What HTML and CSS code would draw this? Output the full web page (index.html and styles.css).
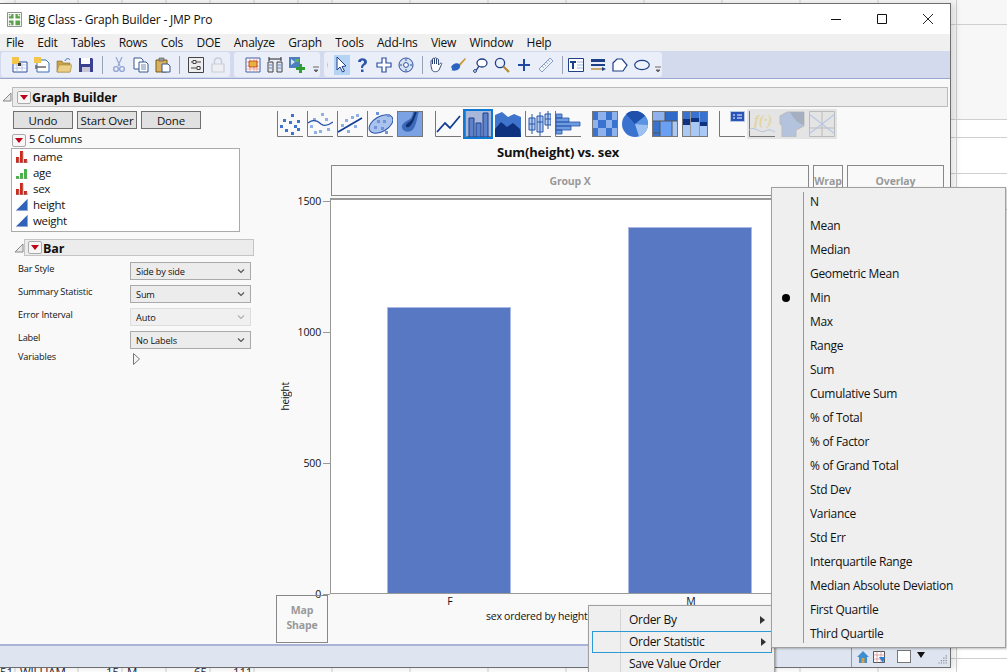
FILE: index.html
```html
<html>
  <head>
    <title>Big Class - Graph Builder - JMP Pro</title>
    <link rel="stylesheet" href="styles.css">
  </head>
  <body>
    <svg class="defs">
      <symbol id="chev" viewBox="0 0 8 8"><path d="M1 2 L7 2 M2 5 L6 5 L4 7 Z" stroke="#666" fill="#666"></path></symbol>
      <symbol id="grip" viewBox="0 0 4 20"><path d="M2 1 V3 M2 7 V9 M2 12 V14 M2 17 V19" stroke="#444" stroke-width="2"></path></symbol>
      <symbol id="disc" viewBox="0 0 10 10"><path d="M9 1 V9 H1 Z" fill="#e8e8e8" stroke="#888"></path></symbol>
      <symbol id="down" viewBox="0 0 8 6"><path d="M1 1.5 L4 4.5 L7 1.5" fill="none" stroke="#555" stroke-width="1.2"></path></symbol>
      <symbol id="nom" viewBox="0 0 12 12"><path d="M0 6 H3 V12 H0 Z M4 0 H7 V12 H4 Z M8 8 H11 V12 H8 Z" fill="#d3261a"></path><path d="M3 12 V7 M7 12 V1 M11 12 V9 M0 12 H12" stroke="#999" stroke-width=".8"></path></symbol>
      <symbol id="ord" viewBox="0 0 12 12"><path d="M0 9 H3 V12 H0 Z M4 6 H7 V12 H4 Z M8 2 H11 V12 H8 Z" fill="#4cb04c"></path><path d="M0 12 H12" stroke="#999" stroke-width=".8"></path></symbol>
      <symbol id="cont" viewBox="0 0 12 12"><path d="M0 11.5 L11.5 0 V11.5 Z" fill="#2f63b8"></path><path d="M0 12 H12 V0" fill="none" stroke="#8a9bb8" stroke-width=".8"></path></symbol>
      <symbol id="axes" viewBox="0 0 26 26"><path d="M.5 0 V25.5 H26" fill="none" stroke="#777"></path></symbol>
    </svg>

    <div class="sheet">
      <svg class="sheet-lines" width="1007" height="672">
        <path d="M15 0 V3 M78 0 V3 M122 0 V3 M166 0 V3 M210 0 V3 M254 0 V3 M298 0 V3 M332 0 V3 M410 0 V3 M488 0 V3 M566 0 V3 M644 0 V3 M722 0 V3 M800 0 V3 M878 0 V3 M956.5 0 V672
                 M15 667 V672 M78 667 V672 M122 667 V672 M166 667 V672 M210 667 V672 M254 667 V672 M332 667 V672 M410 667 V672 M488 667 V672 M566 667 V672 M644 667 V672 M722 667 V672 M800 667 V672 M878 667 V672
                 M951 24.5 H1007 M951 119.5 H1007 M951 137.5 H1007 M951 173.5 H1007 M951 209.5 H1007 M951 658.5 H1007" stroke="#cfcfcf" fill="none"></path>
      </svg>
      <div class="sheet-row">
        <span class="cell-id">51</span><span class="cell-name">WILLIAM</span><span class="cell-num">15</span><span class="cell-sex">M</span><span class="cell-num2">65</span><span class="cell-num3">111</span>
      </div>
    </div>

    <div class="window">
      <div class="titlebar">
        <svg class="app-icon" viewBox="0 0 16 16">
          <path d="M.5 .5 H15.5 V15.5 H.5 Z" fill="#fff" stroke="#888"></path>
          <path d="M2 2 H7 V7 H2 Z M9 2 H14 V7 H9 Z M2 9 H7 V14 H2 Z M9 9 H14 V14 H9 Z" fill="#5fa14e"></path>
          <path d="M4 2 V4 H2 M12 2 V4 H14 M4 14 V12 H2" stroke="#fff" fill="none"></path>
        </svg>
        <span class="title-text">Big Class - Graph Builder - JMP Pro</span>
        <div class="win-controls">
          <svg class="win-btn" viewBox="0 0 10 10"><path d="M0 5.5 H10" stroke="#111"></path></svg>
          <svg class="win-btn" viewBox="0 0 10 10"><path d="M.5 .5 H9.5 V9.5 H.5 Z" stroke="#111" fill="none"></path></svg>
          <svg class="win-btn" viewBox="0 0 10 10"><path d="M0 0 L10 10 M10 0 L0 10" stroke="#111" stroke-width=".9"></path></svg>
        </div>
      </div>

      <div class="menubar">
        <span>File</span><span>Edit</span><span>Tables</span><span>Rows</span><span>Cols</span><span>DOE</span><span>Analyze</span><span>Graph</span><span>Tools</span><span>Add-Ins</span><span>View</span><span>Window</span><span>Help</span>
      </div>

      <div class="toolbar">
        <div class="tool-group g1">
          <svg class="grip"><use href="#grip"></use></svg>
          <svg class="tool" viewBox="0 0 16 16"><path d="M1 5 H15 V15 H1 Z" fill="#fff" stroke="#2a4f9e"></path><path d="M1 8 H15 M1 11 H15 M5 5 V15 M10 5 V15" stroke="#9db6e0" stroke-width=".7"></path><path d="M0 0 H7 V7 H0 Z" fill="#f1c64a"></path><path d="M6 6 H9 V9 H6 Z" fill="#333"></path></svg>
          <svg class="tool" viewBox="0 0 16 16"><path d="M3 3 H12 L15 6 V15 H3 Z" fill="#fff" stroke="#3b6fb5"></path><path d="M0 0 H7 V6 H0 Z" fill="#f1c64a"></path><path d="M2 10 H12 M2 8 V12" stroke="#666" stroke-width="1.5"></path></svg>
          <svg class="tool" viewBox="0 0 16 16"><path d="M1 4 H6 L7 6 H14 V15 H1 Z" fill="#c9a24a" stroke="#8a6c20" stroke-width=".6"></path><path d="M3 8 H16 L14 15 H1 Z" fill="#ecd088" stroke="#a88a3a" stroke-width=".6"></path><path d="M9 4 C10 1 13 1 14 3" fill="none" stroke="#3a6fc8"></path></svg>
          <svg class="tool" viewBox="0 0 16 16"><path d="M1 1 H14 L15 2 V15 H1 Z" fill="#39408f"></path><path d="M3 1 H12 V7 H3 Z" fill="#fff"></path><path d="M4 10 H12 V15 H4 Z" fill="#c8c8d8"></path></svg>
          <span class="tool-sep"></span>
          <svg class="tool off" viewBox="0 0 16 16"><path d="M5 0 L9 9 M11 0 L7 9" stroke="#7f95c8" stroke-width="1.2"></path><circle cx="5" cy="12" r="2.4" fill="none" stroke="#7f95c8" stroke-width="1.4"></circle><circle cx="11" cy="12" r="2.4" fill="none" stroke="#7f95c8" stroke-width="1.4"></circle></svg>
          <svg class="tool" viewBox="0 0 16 16"><path d="M1 1 H8 L10 3 V12 H1 Z" fill="#fff" stroke="#34598f"></path><path d="M6 5 H13 L15 7 V15 H6 Z" fill="#fff" stroke="#34598f"></path><path d="M8 8 H13 M8 10 H13 M8 12 H13" stroke="#34598f" stroke-width=".7"></path></svg>
          <svg class="tool" viewBox="0 0 16 16"><path d="M1 3 H12 V15 H1 Z" fill="#d8b060" stroke="#7a5a18"></path><path d="M4 1 H9 V4 H4 Z" fill="#999" stroke="#555" stroke-width=".6"></path><path d="M7 7 H13 L15 9 V15 H7 Z" fill="#fff" stroke="#34598f"></path></svg>
          <span class="tool-sep"></span>
          <svg class="tool" viewBox="0 0 16 16"><path d="M.5 .5 H15.5 V15.5 H.5 Z" fill="#eee" stroke="#444"></path><path d="M3 5 H13 M3 11 H13" stroke="#444"></path><path d="M5 3.5 H8 V6.5 H5 Z M9 9.5 H12 V12.5 H9 Z" fill="#fff" stroke="#444"></path></svg>
          <svg class="tool off" viewBox="0 0 16 16"><path d="M2 7 H14 V15 H2 Z" fill="#eef0f4" stroke="#c2c6cc" stroke-width="1.2"></path><path d="M4.5 7 V4 C4.5 0 11.5 0 11.5 4 V7" fill="none" stroke="#c2c6cc" stroke-width="1.4"></path></svg>
          <svg class="chev"><use href="#chev"></use></svg>
        </div>
        <div class="tool-group g2">
          <svg class="grip"><use href="#grip"></use></svg>
          <svg class="tool" viewBox="0 0 16 16"><path d="M1 1 H15 V15 H1 Z" fill="#fff" stroke="#3b5ea8"></path><path d="M1 5 H15 M1 9 H15 M1 12 H15 M5 1 V15 M9 1 V15 M12 1 V15" stroke="#e58a7a" stroke-width=".7"></path><path d="M4 4 H12 V10 H4 Z" fill="#e9b23e" stroke="#b03020" stroke-width=".8"></path></svg>
          <svg class="tool" viewBox="0 0 16 16"><path d="M1 5 H6 V15 H1 Z M10 5 H15 V15 H10 Z" fill="#dfe6f2" stroke="#444"></path><path d="M2 8 H5 M2 11 H5 M11 8 H14 M11 11 H14" stroke="#6a8ac0"></path><path d="M2 2 H14 M2 0 V4 M14 0 V4" stroke="#222"></path></svg>
          <svg class="tool" viewBox="0 0 16 16"><path d="M0 0 H11 V11 H0 Z" fill="#4d7fbf"></path><path d="M2 2 L6 5 L2 8 Z" fill="#d6e8f5"></path><path d="M6 2 H10 V5 H6 Z" fill="#57b06a"></path><path d="M10 7 H13 V10 H16 V13 H13 V16 H10 V13 H7 V10 H10 Z" fill="#2fa02f"></path></svg>
          <svg class="chev"><use href="#chev"></use></svg>
        </div>
        <div class="tool-group g3">
          <svg class="grip"><use href="#grip"></use></svg>
          <span class="tool-active"><svg class="tool" viewBox="0 0 16 16"><path d="M3 0 V13 L6 10 L8.5 15 L10.5 14 L8 9.5 L12 9 Z" fill="#fff" stroke="#1f3f86"></path></svg></span>
          <svg class="tool" viewBox="0 0 16 16"><path d="M4 5 C4 0 13 0 13 5 C13 8 9 8 9 11 H7 C7 7 10 7 10 5 C10 3 7 3 7 5 Z" fill="#2a55a8"></path><path d="M7 12.5 H9.5 V15 H7 Z" fill="#2a55a8"></path></svg>
          <svg class="tool" viewBox="0 0 16 16"><path d="M6 1 H10 V6 H15 V10 H10 V15 H6 V10 H1 V6 H6 Z" fill="#fff" stroke="#2a4f9e" stroke-width="1.2"></path></svg>
          <svg class="tool" viewBox="0 0 16 16"><circle cx="8" cy="8" r="7" fill="#d5e0f2" stroke="#2a4f9e"></circle><circle cx="8" cy="8" r="2.4" fill="#fff" stroke="#2a4f9e"></circle><path d="M8 2 V4 M8 12 V14 M2 8 H4 M12 8 H14" stroke="#2a4f9e"></path></svg>
          <span class="tool-sep tight"></span>
          <svg class="tool" viewBox="0 0 16 16"><path d="M3 9 V4 C3 3 4.5 3 4.5 4 V7 V2 C4.5 1 6.5 1 6.5 2 V7 V1.5 C6.5 .5 8.5 .5 8.5 1.5 V7 V2.5 C8.5 1.5 10.5 1.5 10.5 2.5 V8 L12 6.5 C13 5.5 14.5 6.5 13.5 7.5 L11 13 C10 15 5 15.5 4 13 Z" fill="#fff" stroke="#2a3f70" stroke-width=".9"></path></svg>
          <svg class="tool" viewBox="0 0 16 16"><path d="M9 7 L15 1 L16 2 L10 9 Z" fill="#c89838"></path><path d="M1 10 C3 6 8 5 10 8 C11 12 6 15 1 13 C3 13 2 11 1 10 Z" fill="#2a63c0"></path></svg>
          <svg class="tool" viewBox="0 0 16 16"><ellipse cx="10" cy="6" rx="5" ry="4" fill="#fff" stroke="#1f3f86" stroke-width="1.3"></ellipse><path d="M7 9 C6 11 5 13 2 15" fill="none" stroke="#1f3f86" stroke-width="1.3"></path><circle cx="3" cy="14" r="1.4" fill="#fff" stroke="#1f3f86"></circle></svg>
          <svg class="tool" viewBox="0 0 16 16"><circle cx="6" cy="6" r="4.6" fill="#e8f0fb" stroke="#1f3f86" stroke-width="1.3"></circle><path d="M9.5 9.5 L15 15" stroke="#b88a30" stroke-width="2.2"></path></svg>
          <svg class="tool" viewBox="0 0 16 16"><path d="M8 2 V14 M2 8 H14" stroke="#1f4aa0" stroke-width="2"></path></svg>
          <svg class="tool" viewBox="0 0 16 16"><path d="M1 12 L12 1 L15 4 L4 15 Z" fill="#eef2fa" stroke="#8b9cc2"></path><path d="M4 9 L6 11 M6 7 L8 9 M8 5 L10 7 M10 3 L12 5" stroke="#8b9cc2" stroke-width=".7"></path></svg>
          <span class="tool-sep tight"></span>
          <svg class="tool" viewBox="0 0 16 16"><path d="M.5 1.5 H15.5 V14.5 H.5 Z" fill="#fff" stroke="#1f3f86"></path><path d="M9 5 H15 M9 8 H15 M9 11 H15" stroke="#9db6e0"></path><path d="M2 4 H8 V6 H6 V12 H4 V6 H2 Z" fill="#1f3f86"></path></svg>
          <svg class="tool" viewBox="0 0 16 16"><path d="M1 2 H15 V5 H1 Z M1 7 H15 V9 H1 Z" fill="#1f3f86"></path><path d="M1 12 H13" stroke="#b88a30" stroke-width="1.4"></path><path d="M12 10 L16 12 L12 14 Z" fill="#1f3f86"></path></svg>
          <svg class="tool" viewBox="0 0 16 16"><path d="M1 6 L5 2 H10 L15 8 L11 14 H1 Z" fill="#fff" stroke="#1f3f86" stroke-width="1.2"></path></svg>
          <svg class="tool" viewBox="0 0 16 16"><ellipse cx="8" cy="8" rx="7.3" ry="4.6" fill="#eef3fb" stroke="#1f3f86" stroke-width="1.2"></ellipse></svg>
          <svg class="chev chev-g3"><use href="#chev"></use></svg>
        </div>
      </div>

      <div class="outline-main">
        <svg class="disc"><use href="#disc"></use></svg>
        <div class="outline-box"><span class="redbtn"></span><span class="outline-title">Graph Builder</span></div>
      </div>

      <div class="builder">
        <div class="side">
          <div class="side-buttons">
            <span class="push">Undo</span><span class="push">Start Over</span><span class="push">Done</span>
          </div>
          <div class="cols-head"><span class="redbtn"></span><span class="cols-text">5 Columns</span></div>
          <div class="col-list">
            <div class="col-row"><svg class="col-icon"><use href="#nom"></use></svg><span>name</span></div>
            <div class="col-row"><svg class="col-icon"><use href="#ord"></use></svg><span>age</span></div>
            <div class="col-row"><svg class="col-icon"><use href="#nom"></use></svg><span>sex</span></div>
            <div class="col-row"><svg class="col-icon"><use href="#cont"></use></svg><span>height</span></div>
            <div class="col-row"><svg class="col-icon"><use href="#cont"></use></svg><span>weight</span></div>
          </div>
          <div class="bar-head">
            <svg class="disc"><use href="#disc"></use></svg>
            <div class="bar-box"><span class="redbtn"></span><span class="outline-title">Bar</span></div>
          </div>
          <div class="opts">
            <span class="opt-label">Bar Style</span>
            <div class="select"><span>Side by side</span><svg class="select-arrow"><use href="#down"></use></svg></div>
            <span class="opt-label">Summary Statistic</span>
            <div class="select"><span>Sum</span><svg class="select-arrow"><use href="#down"></use></svg></div>
            <span class="opt-label">Error Interval</span>
            <div class="select disabled"><span>Auto</span><svg class="select-arrow"><use href="#down"></use></svg></div>
            <span class="opt-label">Label</span>
            <div class="select"><span>No Labels</span><svg class="select-arrow"><use href="#down"></use></svg></div>
            <span class="opt-label">Variables</span>
            <svg class="var-arrow" viewBox="0 0 7 12"><path d="M.5 .5 L6.5 6 L.5 11.5 Z" fill="#f4f4f4" stroke="#777"></path></svg>
          </div>
        </div>

        <div class="main">
          <div class="gallery">
            <svg class="gal" viewBox="0 0 26 26"><use href="#axes"></use><path d="M14 3h3v3h-3z M6 8h3v3h-3z M12 10h3v3h-3z M20 9h3v3h-3z M3 14h3v3h-3z M17 14h3v3h-3z M8 18h3v3h-3z M14 21h3v3h-3z M20 17h3v3h-3z" fill="#3f74cc"></path></svg>
            <svg class="gal" viewBox="0 0 26 26"><use href="#axes"></use><path d="M14 2h3v3h-3z M6 7h3v3h-3z M18 7h3v3h-3z M3 14h3v3h-3z M12 19h3v3h-3z M20 17h3v3h-3z M7 20h3v3h-3z" fill="#8fb0e4"></path><path d="M1 12 C6 8 10 9 14 13 C18 16 22 14 26 11" fill="none" stroke="#2755a8" stroke-width="1.4"></path></svg>
            <svg class="gal" viewBox="0 0 26 26"><use href="#axes"></use><path d="M14 5h3v3h-3z M8 8h3v3h-3z M19 3h3v3h-3z M4 13h3v3h-3z M17 14h3v3h-3z M10 19h3v3h-3z" fill="#8fb0e4"></path><path d="M1 21 L25 7" stroke="#103c96" stroke-width="1.6"></path></svg>
            <svg class="gal" viewBox="0 0 26 26"><use href="#axes"></use><ellipse cx="14" cy="13" rx="13" ry="7.5" transform="rotate(-30 14 13)" fill="#a9c2ee" stroke="#2755a8"></ellipse><path d="M9 1h3v3h-3z M20 3h3v3h-3z M10 9h3v3h-3z M16 9h3v3h-3z M7 15h3v3h-3z M14 16h3v3h-3z M18 20h3v3h-3z" fill="#6f95d8"></path></svg>
            <svg class="gal gal-fill" viewBox="0 0 26 26"><path d="M0 0 H26 V26 H0 Z" fill="#7ba3e4"></path><path d="M16 0 H22 C20 6 20 12 17 17 C14 22 7 22 5 17 C4 12 10 10 13 8 C15 6 16 3 16 0 Z" fill="#3b6ab8"></path><path d="M18 0 H20 C18 6 17 10 14 14 C11 18 8 16 9 14 C10 12 14 10 15 8 C16 6 17 3 18 0 Z" fill="#10306e"></path></svg>

            <svg class="gal gal-next" viewBox="0 0 26 26"><use href="#axes"></use><path d="M2 21 L10 12 L15 17 L25 5" fill="none" stroke="#103c96" stroke-width="1.8"></path></svg>
            <span class="gal-selected"><svg class="gal" viewBox="0 0 26 26"><use href="#axes"></use><path d="M4 7h5v19h-5z M11 12h5v14h-5z M18 2h5v24h-5z" fill="#5d82cc" stroke="#1d3f8c"></path></svg></span>
            <svg class="gal" viewBox="0 0 26 26"><path d="M0 4 L7 1 L13 6 L19 3 L26 6 V26 H0 Z" fill="#3f74cc"></path><path d="M0 18 L6 11 L12 16 L18 12 L25 18 L26 26 H0 Z" fill="#0f3280"></path></svg>
            <svg class="gal" viewBox="0 0 26 26"><use href="#axes"></use><path d="M4 7 H10 V19 H4 Z M12 5 H18 V21 H12 Z M20 3 H26 V14 H20 Z" fill="#b6cdf2" stroke="#2755a8"></path><path d="M7 3 V23 M15 1 V25 M23 0 V18 M4 13 H10 M12 11 H18 M20 8 H26" stroke="#2755a8"></path></svg>
            <svg class="gal" viewBox="0 0 26 26"><use href="#axes"></use><path d="M1 3 H7 V7 H1 Z M1 7 H14 V11 H1 Z M1 11 H25 V15 H1 Z M1 15 H16 V19 H1 Z M1 19 H7 V23 H1 Z" fill="#6f9be0" stroke="#2755a8" stroke-width=".8"></path></svg>

            <svg class="gal gal-next2 gal-fill" viewBox="0 0 26 26"><path d="M0 0 H26 V26 H0 Z" fill="#8fb2ec"></path><path d="M0 0 H6 V9 H0 Z M14 0 H20 V9 H14 Z M6 9 H14 V17 H6 Z M20 9 H26 V17 H20 Z M0 17 H6 V26 H0 Z M14 17 H20 V26 H14 Z" fill="#3a72d0"></path></svg>
            <svg class="gal" viewBox="0 0 26 26"><circle cx="13" cy="13" r="13" fill="#3a72d0"></circle><path d="M13 13 L4 3 A13 13 0 0 1 23 5 Z" fill="#1e50ac"></path><path d="M13 13 L23 5 A13 13 0 0 1 26 14 Z" fill="#5a93e4"></path><path d="M13 13 L26 14 A13 13 0 0 1 17 25.4 Z" fill="#9cc0f2"></path></svg>
            <svg class="gal gal-fill" viewBox="0 0 26 26"><path d="M0 0 H13 V10 H0 Z" fill="#8fb2ec"></path><path d="M13 0 H26 V10 H13 Z" fill="#2f6ac8"></path><path d="M0 10 H8 V26 H0 Z" fill="#3a72d0"></path><path d="M8 10 H20 V26 H8 Z" fill="#6aa0f4"></path><path d="M20 10 H26 V26 H20 Z" fill="#a9c8f4"></path><path d="M13 0 V10 M0 10 H26 M8 10 V26 M20 10 V26 M0 22 H8" stroke="#555"></path></svg>
            <svg class="gal gal-fill" viewBox="0 0 26 26"><path d="M0 0 H26 V26 H0 Z" fill="#a9c8f4"></path><path d="M0 0 H8 V12 H0 Z M9 0 H17 V7 H9 Z M18 0 H26 V14 H18 Z" fill="#3a72d0"></path><path d="M0 8 H8 V14 H0 Z M9 7 H17 V11 H9 Z M18 11 H26 V15 H18 Z" fill="#0f3280"></path><path d="M8.5 0 V26 M17.5 0 V26" stroke="#999"></path></svg>

            <svg class="gal gal-next2" viewBox="0 0 26 26"><use href="#axes"></use><path d="M11.5 .5 H25.5 V10.5 H11.5 Z" fill="#2a55b8" stroke="#b9c6e0"></path><path d="M14 4 H16 M14 7 H16 M18 4 H23 M18 7 H23" stroke="#fff"></path></svg>
            <div class="gal-off">
              <svg class="gal" viewBox="0 0 26 26"><use href="#axes"></use><text class="fx" x="5" y="14">f(·)</text><path d="M0 19 C6 14 10 23 16 20 C20 18 22 19 26 21" fill="none" stroke="#b5c4dc"></path></svg>
              <svg class="gal" viewBox="0 0 26 26"><path d="M1 5 L8 1 H25 V15 L17 19 V26 H3 V15 L1 13 Z" fill="#b4c3dd" stroke="#bbb"></path><path d="M11 1 H25 V14 C20 13 15 9 11 1 Z" fill="#a6afbf"></path></svg>
              <svg class="gal" viewBox="0 0 26 26"><path d="M.5 .5 H25.5 V25.5 H.5 Z" fill="none" stroke="#bbb"></path><path d="M13 0 V26 M0 17 H26" stroke="#bbb"></path><path d="M0 3 L26 23 M0 23 L26 3" stroke="#b9c8e2" stroke-width="1.3"></path></svg>
            </div>
          </div>

          <div class="graph-title">Sum(height) vs. sex</div>

          <div class="graph">
            <div class="zones">
              <div class="zone zone-group">Group X</div>
              <div class="zone zone-wrap">Wrap</div>
              <div class="zone zone-overlay">Overlay</div>
            </div>
            <div class="y-axis">
              <span class="y-title">height</span>
              <div class="ticks">
                <div class="tick">1500</div>
                <div class="tick">1000</div>
                <div class="tick">500</div>
                <div class="tick">0</div>
              </div>
            </div>
            <div class="plot">
              <div class="bar" style="height: 286px"></div>
              <div class="bar" style="height: 366px"></div>
            </div>
            <div class="map-shape">Map<br>Shape</div>
            <div class="x-axis">
              <div class="x-labels"><span>F</span><span>M</span></div>
              <div class="x-title">sex ordered by height</div>
            </div>
          </div>
        </div>
      </div>

      <div class="statusbar">
        <span class="status-sep"></span>
        <svg class="status-icon" viewBox="0 0 12 12"><path d="M0 6 L6 0 L12 6 H10 V12 H2 V6 Z" fill="#3f8fd0"></path><path d="M4.5 7 H7.5 V12 H4.5 Z" fill="#d8a040"></path></svg>
        <svg class="status-icon" viewBox="0 0 12 12"><path d="M.5 .5 H11.5 V11.5 H.5 Z" fill="#fff" stroke="#555"></path><path d="M.5 4 H11.5 M.5 8 H11.5 M4 .5 V11.5 M8 .5 V11.5" stroke="#d08a8a" stroke-width=".7"></path><path d="M6 6 L12 6 L10 12 Z" fill="#2f7fd0"></path></svg>
        <span class="status-box"></span>
        <span class="status-tri"></span>
        <svg class="status-grip" viewBox="0 0 10 10"><path d="M8 1h1v1h-1z M6 3h1v1h-1z M8 3h1v1h-1z M4 5h1v1h-1z M6 5h1v1h-1z M8 5h1v1h-1z M2 7h1v1h-1z M4 7h1v1h-1z M6 7h1v1h-1z M8 7h1v1h-1z" fill="#8a8a8a"></path></svg>
      </div>
    </div>

    <div class="menu order-menu">
      <div class="menu-item">Order By<span class="sub"></span></div>
      <div class="menu-item hot">Order Statistic<span class="sub"></span></div>
      <div class="menu-item">Save Value Order</div>
    </div>

    <div class="menu stat-menu">
      <div class="stat-item">N</div>
      <div class="stat-item">Mean</div>
      <div class="stat-item">Median</div>
      <div class="stat-item">Geometric Mean</div>
      <div class="stat-item checked">Min</div>
      <div class="stat-item">Max</div>
      <div class="stat-item">Range</div>
      <div class="stat-item">Sum</div>
      <div class="stat-item">Cumulative Sum</div>
      <div class="stat-item">% of Total</div>
      <div class="stat-item">% of Factor</div>
      <div class="stat-item">% of Grand Total</div>
      <div class="stat-item">Std Dev</div>
      <div class="stat-item">Variance</div>
      <div class="stat-item">Std Err</div>
      <div class="stat-item">Interquartile Range</div>
      <div class="stat-item">Median Absolute Deviation</div>
      <div class="stat-item">First Quartile</div>
      <div class="stat-item">Third Quartile</div>
    </div>
  </body>
</html>
```

FILE: styles.css
```css
* {
  box-sizing: border-box;
}
html, body {
  margin: 0;
  padding: 0;
  width: 1007px;
  height: 672px;
  overflow: hidden;
}
body {
  position: relative;
  background: #fff;
  font-family: "Open Sans", "Noto Sans", sans-serif;
  font-size: 11.5px;
  letter-spacing: -.15px;
  color: #111;
}
.defs {
  display: none;
}

/* spreadsheet window behind */
.sheet {
  position: absolute;
  inset: 0;
  background: linear-gradient(#f7f7f7 119px, #fff 119px);
}
.sheet-lines {
  position: absolute;
  left: 0;
  top: 0;
}
.sheet-row {
  position: absolute;
  left: 0;
  top: 665px;
  width: 260px;
  height: 14px;
  font-size: 11.5px;
  line-height: 14px;
  color: #223;
}
.sheet-row span {
  position: absolute;
  top: 0;
}
.cell-id {
  left: 0;
}
.cell-name {
  left: 20px;
}
.cell-num {
  left: 106px;
}
.cell-sex {
  left: 127px;
}
.cell-num2 {
  left: 194px;
}
.cell-num3 {
  left: 233px;
}

/* main window */
.window {
  position: absolute;
  left: 0;
  top: 3px;
  width: 951px;
  height: 665px;
  display: flex;
  flex-direction: column;
  background: #f9f9f9;
  border: 1px solid #6e6e6e;
  border-left: 0;
  box-shadow: 4px 0 7px rgba(0, 0, 0, .12);
}
.titlebar {
  height: 30px;
  flex: none;
  display: flex;
  align-items: center;
  background: #fff;
  padding-left: 7px;
}
.app-icon {
  width: 15px;
  height: 15px;
}
.title-text {
  margin-left: 6px;
  font-size: 12px;
  letter-spacing: -.2px;
}
.win-controls {
  margin-left: auto;
  display: flex;
  align-items: center;
  gap: 36px;
  padding-right: 17px;
}
.win-btn {
  width: 10px;
  height: 10px;
  overflow: visible;
}
.menubar {
  height: 17px;
  flex: none;
  display: flex;
  align-items: center;
  gap: 13.5px;
  padding-left: 6px;
  background: #f0f0f0;
  font-size: 12px;
  letter-spacing: -.3px;
}
.toolbar {
  height: 28px;
  flex: none;
  display: flex;
  gap: 4px;
  padding: 1px 0 0 1px;
  background: #d4daed;
  border-bottom: 1px solid #9aa8d0;
}
.tool-group {
  height: 25px;
  display: flex;
  align-items: center;
  gap: 6px;
  padding-left: 3px;
  background: #e9eef9;
  border-radius: 3px;
}
.g1 {
  width: 229px;
}
.g2 {
  width: 86px;
}
.g3 {
  width: 338px;
}
.grip {
  width: 4px;
  height: 20px;
  margin-right: 2px;
}
.tool {
  width: 16px;
  height: 16px;
  flex: none;
}
.off {
  opacity: .8;
}
.tool-sep {
  width: 1px;
  height: 18px;
  background: #9aa3b5;
  margin: 0 2px;
  flex: none;
}
.tool-sep.tight {
  margin-right: -1px;
}
.tool-active {
  width: 20px;
  height: 20px;
  margin: 0 -2px;
  display: flex;
  align-items: center;
  justify-content: center;
  background: #b3d4f5;
}
.chev {
  width: 8px;
  height: 8px;
  margin: 8px 0 0 1px;
  flex: none;
}
.chev-g3 {
  margin-left: -2px;
}

/* outline headers */
.outline-main {
  margin-top: 8px;
  height: 20px;
  flex: none;
  display: flex;
  align-items: center;
  padding-left: 2px;
}
.disc {
  width: 10px;
  height: 10px;
  flex: none;
}
.outline-box {
  width: 936px;
  height: 20px;
  display: flex;
  align-items: center;
  padding-left: 4px;
  background: #ececec;
  border: 1px solid #bbb;
}
.outline-title {
  margin-left: 1px;
  padding-top: 1px;
  font-weight: bold;
  font-size: 12.5px;
  color: #111;
}
.redbtn {
  position: relative;
  width: 14px;
  height: 13px;
  flex: none;
  background: #f6f6f6;
  border: 1px solid #aaa;
  border-radius: 2px;
}
.redbtn::after {
  content: "";
  position: absolute;
  left: 2px;
  top: 3px;
  border-left: 4px solid transparent;
  border-right: 4px solid transparent;
  border-top: 5px solid #c00018;
}

/* left panel */
.builder {
  flex: 1;
  display: flex;
  min-height: 0;
}
.side {
  width: 276px;
  flex: none;
  padding-left: 13px;
}
.side-buttons {
  margin-top: 4px;
  display: flex;
  gap: 4px;
}
.push {
  width: 60px;
  height: 18px;
  display: flex;
  align-items: center;
  justify-content: center;
  background: #e1e1e1;
  border: 1px solid #707070;
  font-size: 11.5px;
}
.cols-head {
  margin: 5px 0 2px -1px;
  height: 12px;
  display: flex;
  align-items: center;
  gap: 3px;
  font-size: 11px;
}
.cols-text {
  margin-top: -3px;
}
.col-list {
  margin-left: -2px;
  width: 229px;
  height: 84px;
  background: #fff;
  border: 1px solid #aaa;
}
.col-row {
  height: 16px;
  display: flex;
  align-items: center;
  gap: 5px;
  padding-left: 4px;
  font-size: 11.5px;
  letter-spacing: -.3px;
}
.col-row span {
  margin-top: -1px;
}
.col-icon {
  width: 12px;
  height: 12px;
  flex: none;
}
.bar-head {
  margin: 7px 0 0 1px;
  height: 17px;
  display: flex;
  align-items: center;
}
.bar-box {
  width: 230px;
  height: 17px;
  display: flex;
  align-items: center;
  padding-left: 3px;
  background: #ececec;
  border: 1px solid #c4c4c4;
}
.opts {
  margin: 6px 0 0 5px;
  display: grid;
  grid-template-columns: 112px 121px;
  grid-auto-rows: 18px;
  row-gap: 5px;
  font-size: 9.2px;
}
.select {
  display: flex;
  align-items: center;
  justify-content: space-between;
  padding: 0 5px 0 5px;
  background: #ececec;
  border: 1px solid #aaa;
}
.select.disabled {
  background: #f0f0f0;
  border-color: #ddd;
}
.select.disabled .select-arrow {
  opacity: .4;
}
.select-arrow {
  width: 8px;
  height: 6px;
}
.var-arrow {
  width: 7px;
  height: 12px;
  margin-left: 3px;
  margin-top: -1px;
}
.opts .opt-label:nth-last-child(2) {
  margin-top: -4px;
}

/* right panel */
.main {
  flex: 1;
  min-width: 0;
}
.gallery {
  margin: 2px 0 0 1px;
  height: 30px;
  display: flex;
  align-items: center;
  gap: 4px;
}
.gal {
  width: 26px;
  height: 26px;
  flex: none;
}
.gal-fill {
  outline: 1px solid #777;
  outline-offset: -1px;
}
.gal-next {
  margin-left: 8px;
}
.gal-next2 {
  margin-left: 7px;
}
.gal-selected {
  width: 30px;
  height: 30px;
  margin: 0 -2px;
  flex: none;
  display: flex;
  align-items: center;
  justify-content: center;
  background: #a9b8d8;
  border: 2px solid #0f78d4;
}
.gal-off {
  margin-left: -2px;
  height: 30px;
  display: flex;
  align-items: center;
  gap: 4px;
  padding: 0 2px;
  background: #e4e4e4;
}
.fx {
  font-family: "Liberation Serif", serif;
  font-style: italic;
  font-weight: bold;
  font-size: 15px;
  fill: #e2d5a2;
}
.graph-title {
  margin-top: 6px;
  width: 564px;
  height: 15px;
  line-height: 15px;
  text-align: center;
  font-weight: bold;
  font-size: 13px;
}
.graph {
  margin-top: 5px;
  display: grid;
  grid-template-columns: 54px 615px;
  grid-template-rows: 33px 396px 1fr;
}
.zones {
  grid-column: 2;
  grid-row: 1;
  display: flex;
  gap: 4px;
  padding-left: 1px;
  height: 31px;
}
.zone {
  display: flex;
  align-items: center;
  justify-content: center;
  border: 1px solid #888;
  font-weight: bold;
  font-size: 10.5px;
  color: #999;
}
.zone-group {
  width: 478px;
}
.zone-wrap {
  width: 30px;
}
.zone-overlay {
  width: 97px;
}
.y-axis {
  grid-column: 1;
  grid-row: 2;
  display: flex;
}
.y-title {
  writing-mode: vertical-rl;
  transform: rotate(180deg);
  align-self: center;
  width: 16px;
  font-size: 10px;
  margin-left: 2px;
}
.ticks {
  flex: 1;
  display: flex;
  flex-direction: column;
  justify-content: space-between;
  padding-top: 3px;
}
.tick {
  height: 0;
  display: flex;
  align-items: center;
  justify-content: flex-end;
  gap: 2px;
  font-size: 10.5px;
}
.tick::after {
  content: "";
  width: 7px;
  height: 1px;
  background: #999;
}
.plot {
  grid-column: 2;
  grid-row: 2;
  display: flex;
  align-items: flex-end;
  gap: 117px;
  padding-left: 56px;
  background: #fff;
  border: 1px solid #999;
  border-top-width: 2px;
}
.bar {
  width: 124px;
  background: #5878c4;
  border: 1px solid #a9b9e3;
  border-bottom: 0;
}
.map-shape {
  grid-column: 1;
  grid-row: 3;
  width: 52px;
  height: 48px;
  margin-top: 1px;
  padding-bottom: 2px;
  display: flex;
  align-items: center;
  justify-content: center;
  text-align: center;
  line-height: 15px;
  border: 1px solid #888;
  font-weight: bold;
  font-size: 10.5px;
  color: #999;
}
.x-axis {
  grid-column: 2;
  grid-row: 3;
  font-size: 10.5px;
}
.x-labels {
  height: 15px;
  display: flex;
  gap: 117px;
  padding-left: 58px;
}
.x-labels span {
  width: 124px;
  text-align: center;
}
.x-title {
  padding-left: 156px;
  letter-spacing: -.25px;
}

/* bottom status */
.statusbar {
  height: 23px;
  flex: none;
  display: flex;
  align-items: center;
  padding-left: 851px;
  background: #dfe5f0;
  border-top: 2px solid #aab2d6;
}
.status-sep {
  width: 1px;
  height: 21px;
  background: #999;
}
.status-icon {
  width: 12px;
  height: 12px;
  margin-left: 5px;
  margin-right: -1px;
  flex: none;
}
.status-box {
  width: 14px;
  height: 13px;
  margin-left: 13px;
  background: #fff;
  border: 1px solid #777;
}
.status-tri {
  margin: -3px 0 0 6px;
  border-left: 4px solid transparent;
  border-right: 4px solid transparent;
  border-top: 6px solid #111;
}
.status-grip {
  width: 12px;
  height: 12px;
  margin: 6px 0 0 11px;
}

/* popup menus */
.menu {
  position: absolute;
  background: #efefef;
  border: 1px solid #a0a0a0;
  font-size: 12px;
  letter-spacing: -.3px;
}
.order-menu {
  left: 588px;
  top: 605px;
  width: 187px;
  height: 80px;
  padding: 3px 3px 0 3px;
  box-shadow: 1px 1px 2px rgba(0, 0, 0, .35);
}
.order-menu::before {
  content: "";
  position: absolute;
  left: 31px;
  top: 3px;
  bottom: 0;
  width: 1px;
  background: #d4d4d4;
}
.menu-item {
  position: relative;
  height: 22px;
  line-height: 19px;
  padding-left: 36px;
  border: 1px solid transparent;
}
.menu-item.hot {
  width: 180px;
  border-color: #2b9bd8;
}
.sub {
  position: absolute;
  right: 5px;
  top: 6px;
  border-top: 4px solid transparent;
  border-bottom: 4px solid transparent;
  border-left: 5px solid #333;
}
.stat-menu {
  left: 771px;
  top: 187px;
  width: 235px;
  height: 461px;
  padding: 2px 0 0 0;
  box-shadow: 1px 1px 2px rgba(0, 0, 0, .25);
}
.stat-menu::before {
  content: "";
  position: absolute;
  left: 31px;
  top: 4px;
  bottom: 4px;
  width: 1px;
  background: #999;
}
.stat-item {
  position: relative;
  height: 24px;
  line-height: 24px;
  padding-left: 38px;
}
.checked::before {
  content: "";
  position: absolute;
  left: 10px;
  top: 8px;
  width: 8px;
  height: 8px;
  border-radius: 50%;
  background: #000;
}
```
